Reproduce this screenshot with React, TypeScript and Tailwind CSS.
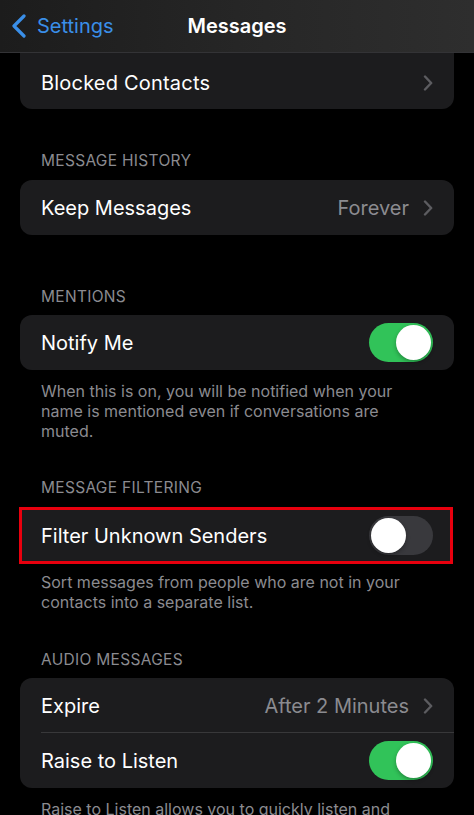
import React from "react";

const font = { fontFamily: "Inter, 'Noto Sans', sans-serif" };

function Chevron() {
  return (
    <svg width="10" height="16" viewBox="0 0 10 16" className="shrink-0">
      <path d="M2 1.5 L8.2 8 L2 14.5" fill="none" stroke="#5c5c60" strokeWidth="2.4" strokeLinecap="round" strokeLinejoin="round" />
    </svg>
  );
}

function Toggle({ on }: { on: boolean }) {
  return (
    <div className={`w-[64px] h-[39px] rounded-full p-[2px] flex shrink-0 ${on ? "bg-[#31c359] justify-end" : "bg-[#39393d] justify-start"}`}>
      <div className="w-[35px] h-[35px] rounded-full bg-white shadow-[0_2px_4px_rgba(0,0,0,0.3)]" />
    </div>
  );
}

function Label({ children, className }: { children: React.ReactNode; className: string }) {
  return (
    <div className={`px-[41px] text-[15.5px] leading-[20px] text-[#8b8b90] tracking-[0.3px] ${className}`}>{children}</div>
  );
}

function Footer({ children, className }: { children: React.ReactNode; className: string }) {
  return (
    <div className={`px-[41px] pr-[60px] text-[16px] leading-[20px] text-[#8b8b90] ${className}`}>{children}</div>
  );
}

export default function App() {
  return (
    <div className="w-[474px] h-[815px] bg-black overflow-hidden text-white" style={font}>
      <div className="h-[53px] grid grid-cols-[1fr_auto_1fr] items-center bg-gradient-to-r from-[#1c1c1c] via-[#262626] to-[#2e2e2e] border-b border-[#333336]">
        <div className="flex items-center pl-[11px] gap-[10px] text-[#3a8fe8] text-[20px]">
          <svg width="16" height="24" viewBox="0 0 16 24">
            <path d="M13 2 L3 12 L13 22" fill="none" stroke="#3a8fe8" strokeWidth="3.2" strokeLinecap="round" strokeLinejoin="round" />
          </svg>
          <span className="-mt-[1px]">Settings</span>
        </div>
        <div className="text-[20px] font-semibold px-[6px]">Messages</div>
        <div />
      </div>

      <div className="mx-[20px] h-[56px] rounded-b-[12px] bg-[#1c1c1e] flex items-center justify-between pl-[21px] pr-[21px] pt-[3px]">
        <span className="text-[20px] tracking-[0.2px]">Blocked Contacts</span>
        <Chevron />
      </div>

      <Label className="pt-[42px] pb-[9px]">MESSAGE HISTORY</Label>
      <div className="mx-[20px] h-[55px] rounded-[12px] bg-[#1c1c1e] flex items-center pl-[21px] pr-[21px]">
        <span className="text-[20px] flex-1">Keep Messages</span>
        <span className="text-[20px] text-[#8b8b90] mr-[14px]">Forever</span>
        <Chevron />
      </div>

      <Label className="pt-[52px] pb-[8px]">MENTIONS</Label>
      <div className="mx-[20px] h-[55px] rounded-[12px] bg-[#1c1c1e] flex items-center justify-between pl-[21px] pr-[21px]">
        <span className="text-[20px]">Notify Me</span>
        <Toggle on={true} />
      </div>
      <Footer className="pt-[11px]">
        When this is on, you will be notified when your name is mentioned even if conversations are muted.
      </Footer>

      <Label className="pt-[37px] pb-[9px]">MESSAGE FILTERING</Label>
      <div className="ml-[19px] w-[434px] h-[57px] border-[3px] border-[#e8000e] bg-[#1c1c1e] flex items-center justify-between pl-[19px] pr-[17px]">
        <span className="text-[20px]">Filter Unknown Senders</span>
        <Toggle on={false} />
      </div>
      <Footer className="pt-[8px]">
        Sort messages from people who are not in your contacts into a separate list.
      </Footer>

      <Label className="pt-[38px] pb-[8px]">AUDIO MESSAGES</Label>
      <div className="mx-[20px] rounded-[12px] bg-[#1c1c1e] flex flex-col">
        <div className="h-[54px] flex items-center pl-[21px] pr-[21px] pt-[1px]">
          <span className="text-[20px] flex-1">Expire</span>
          <span className="text-[20px] text-[#8b8b90] mr-[14px]">After 2 Minutes</span>
          <Chevron />
        </div>
        <div className="ml-[21px] h-px bg-[#38383a]" />
        <div className="h-[55px] flex items-center justify-between pl-[21px] pr-[21px]">
          <span className="text-[20px]">Raise to Listen</span>
          <Toggle on={true} />
        </div>
      </div>
      <Footer className="pt-[11px]">
        Raise to Listen allows you to quickly listen and reply to incoming audio messages by raising the phone to your ear.
      </Footer>
    </div>
  );
}
